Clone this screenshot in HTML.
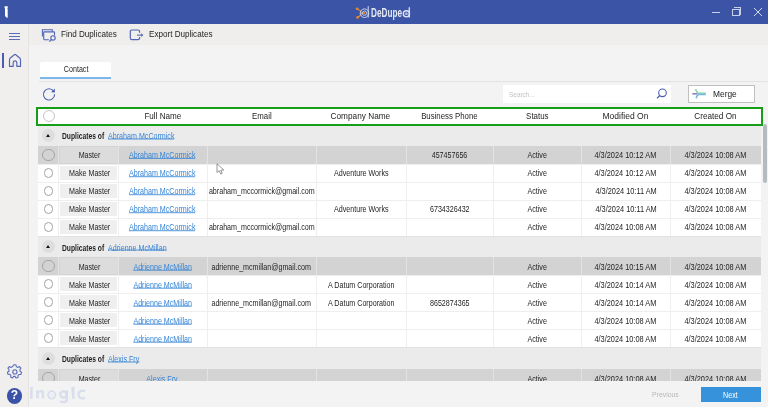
<!DOCTYPE html>
<html><head><meta charset="utf-8">
<style>
*{margin:0;padding:0;box-sizing:border-box}
html,body{width:768px;height:407px;overflow:hidden;background:#f3f3f3;font-family:"Liberation Sans",sans-serif;color:#1e1e1e}
.a{position:absolute}
#title{position:absolute;left:0;top:0;width:768px;height:23.5px;background:#3b54a5}
#side{position:absolute;left:0;top:23.5px;width:29px;height:384px;background:#f0efee;border-right:1px solid #e4e3e2}
#tool{position:absolute;left:29px;top:23.5px;width:740px;height:21.5px;background:#efeeed}
.t{display:inline-block;font-size:8.2px;line-height:10px;white-space:nowrap;transform:translateY(1.2px) scaleX(.87);transform-origin:50% 50%}
.tm{transform:translateY(1.7px) scaleX(.87)}
.td{transform:translateY(1.2px) scaleX(.9)}
.tm.td{transform:translateY(1.7px) scaleX(.9)}
.g2{transform:translateY(1.7px) scaleX(.87)}
.g2.td{transform:translateY(1.7px) scaleX(.9)}
.tm.g1{transform:translateY(0.9px) scaleX(.87)}
.tm.g1.td{transform:translateY(0.9px) scaleX(.9)}
.th{display:inline-block;font-size:8.7px;line-height:11px;white-space:nowrap;transform:scaleX(.93);transform-origin:50% 50%;color:#1e1e1e}
.tb{display:inline-block;font-size:8.3px;line-height:10px;font-weight:bold;white-space:nowrap;transform:translateY(1.3px) scaleX(.81);transform-origin:0 50%;color:#1e1e1e;width:46.2px}
.c{position:absolute;display:flex;align-items:center;justify-content:center;overflow:visible}
.lk{color:#3584d6;transform-origin:0 50%}
.ul{position:relative} .ul::after{content:'';position:absolute;left:0;right:0;top:6.6px;height:0.9px;background:currentColor;opacity:.85}
#gridclip{position:absolute;left:0;top:0;width:768px;height:380.7px;overflow:hidden}
.gh{position:absolute;left:38px;width:723px;background:#ebebeb;border-top:1px solid #e2e2e2}
.ght{position:absolute;left:62px;display:flex;align-items:center}
.col{position:absolute;left:42.2px;width:13px;height:13px;border-radius:50%;background:#dedede}
.tri{position:absolute;left:4px;top:5px;width:0;height:0;border-left:2.6px solid transparent;border-right:2.6px solid transparent;border-bottom:3px solid #111}
.row{position:absolute;left:38px;width:722.8px;background:#fff;border-top:1px solid #eeeeee}
.row.m{background:#d3d3d3;border-top:0}
.vs{position:absolute;top:0;bottom:0;width:1px;background:#efefef}
.row.m .vs{background:#e3e3e3}
.cb{position:absolute;width:11px;height:11px;border-radius:50%;border:1px solid #a3a3a3;background:#fff}
.mcb{background:#d3d3d3;border-color:#a5a5a5}
.btn{position:absolute;background:#efefef;display:flex;align-items:center;justify-content:center}
.mbtn{background:#dcdcdc}
</style></head><body><div style="position:absolute;left:0;top:0;width:768px;height:407px;will-change:transform">
<div id="title">
  <svg class="a" style="left:0;top:0" width="12" height="23" viewBox="0 0 12 23"><path d="M4.6 6.3 H7.7 V7.9 L7.1 8.5 L7.7 9.1 V17.7 L6.2 17.4 L5 15.8 V8.6 L4.6 8.1 Z" fill="#fff"/></svg>
  <svg class="a" style="left:354px;top:3px" width="60" height="18" viewBox="0 0 60 18">
    <path d="M3.1 5.75 Q11.5 10.1 3.6 14.4 M7.4 10.1 H10.4" stroke="#e8892b" stroke-width="1.1" fill="none"/>
    <circle cx="3.1" cy="5.75" r="1.35" fill="#e8892b"/><circle cx="3.6" cy="14.4" r="1.35" fill="#e8892b"/>
    <circle cx="10.5" cy="10.2" r="4.3" stroke="#d5dcf0" stroke-width="0.9" fill="none"/>
    <circle cx="10.5" cy="10.2" r="2.2" stroke="#d5dcf0" stroke-width="0.8" fill="none"/>
    <circle cx="10.4" cy="10.2" r="1.1" fill="#e8892b"/>
    <path d="M14.2 3.1 V14.6" stroke="#d5dcf0" stroke-width="1"/>
    <text x="17" y="14.4" font-family="Liberation Sans" font-weight="bold" font-size="13.2" fill="#e3e8f6" textLength="31" lengthAdjust="spacingAndGlyphs">DeDupe</text>
    <circle cx="52.4" cy="10.8" r="3.1" stroke="#dfe5f5" stroke-width="1.4" fill="none"/><circle cx="52.4" cy="10.8" r="1.2" fill="#c5cdea"/>
    <path d="M55.3 4.2 V14.4" stroke="#dfe5f5" stroke-width="1.3"/>
  </svg>
  <div class="a" style="left:712px;top:12px;width:8px;height:1px;background:#c9d0ea"></div>
  <div class="a" style="left:732px;top:8.5px;width:7.5px;height:7.5px;border:1px solid #c9d0ea"></div>
  <div class="a" style="left:733.5px;top:7px;width:7.5px;height:7.5px;border-top:1px solid #c9d0ea;border-right:1px solid #c9d0ea"></div>
  <svg class="a" style="left:753px;top:7px" width="10" height="10" viewBox="0 0 10 10"><path d="M1 1 L9 9 M9 1 L1 9" stroke="#d3d9ee" stroke-width="1"/></svg>
</div>
<div id="side">
  <div class="a" style="left:9.4px;top:9.2px;width:10.2px;height:1.1px;background:#5b6cb8"></div>
  <div class="a" style="left:9.4px;top:12.4px;width:10.2px;height:1.1px;background:#5b6cb8"></div>
  <div class="a" style="left:9.4px;top:15.6px;width:10.2px;height:1.1px;background:#5b6cb8"></div>
  <div class="a" style="left:2px;top:29.6px;width:1.8px;height:15.2px;background:#4a5db0"></div>
  <svg class="a" style="left:8px;top:29.5px" width="14" height="15" viewBox="0 0 14 15"><path d="M1.5 13.3 V6.4 Q1.5 5.8 2 5.3 L6.3 1.7 Q7 1.2 7.7 1.7 L12 5.3 Q12.5 5.8 12.5 6.4 V13.3 H8.8 V9.6 A1.8 1.8 0 0 0 5.2 9.6 V13.3 Z" fill="none" stroke="#5264b4" stroke-width="1.15" stroke-linejoin="round"/></svg>
  <svg class="a" style="left:6.5px;top:340.7px" width="16" height="16" viewBox="0 0 16 16"><path d="M6.9 1.3 H9.1 L9.5 3.3 L11 4.1 L12.9 3.2 L14.3 4.9 L13.2 6.6 L13.5 8.2 L15.1 9.4 L14.4 11.5 L12.4 11.5 L11.2 12.7 L11.3 14.7 L9.2 15.2 L8.2 13.6 H6.6 L5.5 15.2 L3.6 14.5 L3.7 12.5 L2.6 11.4 L0.6 11.3 L0.1 9.2 L1.8 8.2 V6.6 L0.7 4.9 L2.1 3.2 L4 4.1 L5.5 3.3 Z" transform="translate(0.3,-0.5) scale(0.95)" fill="none" stroke="#5a6cb8" stroke-width="1.15" stroke-linejoin="round"/><circle cx="7.9" cy="7.9" r="2.1" fill="none" stroke="#5a6cb8" stroke-width="1.1"/></svg>
  <div class="a" style="left:7px;top:364.5px;width:15px;height:15.5px;border-radius:50%;background:#3a52a7;color:#fff;font-weight:bold;font-size:12px;line-height:15.5px;text-align:center">?</div>
</div>
<div id="tool">
  <svg class="a" style="left:12px;top:4px" width="16" height="16" viewBox="0 0 16 16">
    <path d="M1.4 8.6 V1.7 H11.3 V3.4" fill="none" stroke="#5264b4" stroke-width="1.1"/>
    <path d="M7.9 11.7 H3.3 Q2.7 11.7 2.7 11.1 V4.5 Q2.7 3.9 3.3 3.9 H12.9 Q13.5 3.9 13.5 4.5 V7.4" fill="none" stroke="#5264b4" stroke-width="1.1"/>
    <circle cx="12" cy="9.9" r="2.2" fill="none" stroke="#5264b4" stroke-width="1.1"/>
    <path d="M10.4 11.5 L8.4 13.6" stroke="#5264b4" stroke-width="1.2"/>
  </svg>
  <span class="a" style="left:32px;top:5.8px;font-size:9px;line-height:11px;transform:scaleX(.9);transform-origin:0 50%;color:#1e1e1e;white-space:nowrap">Find Duplicates</span>
  <svg class="a" style="left:100px;top:4px" width="18" height="16" viewBox="0 0 18 16">
    <path d="M10.6 4.7 V3.6 Q10.6 2 9 2 H2.9 Q1.3 2 1.3 3.6 V10 Q1.3 11.6 2.9 11.6 H9 Q10.6 11.6 10.6 10 V9.1" fill="none" stroke="#5264b4" stroke-width="1.2"/>
    <path d="M8 7.1 H12.6" stroke="#5264b4" stroke-width="1.1"/>
    <path d="M12.2 5.3 L14.4 7.1 L12.2 8.9 Z" fill="#5264b4"/>
  </svg>
  <span class="a" style="left:119.6px;top:5.8px;font-size:9px;line-height:11px;transform:scaleX(.9);transform-origin:0 50%;color:#1e1e1e;white-space:nowrap">Export Duplicates</span>
</div>
<!-- tab -->
<div class="a" style="left:40.3px;top:62px;width:70.8px;height:17px;background:#fff;border-radius:2px 2px 0 0;border-bottom:2px solid #7db7e7"></div>
<div class="c" style="left:40.3px;top:61.3px;width:70.8px;height:15px"><span class="t" style="color:#1e1e1e">Contact</span></div>
<div class="a" style="left:38.5px;top:81px;width:730px;height:1px;background:#e3e3e3"></div>
<svg class="a" style="left:41px;top:86px" width="16" height="16" viewBox="0 0 16 16">
  <path d="M12.6 5.2 A5.6 5.6 0 1 0 13.6 8.3" fill="none" stroke="#5064b4" stroke-width="1.15"/>
  <path d="M13.8 2.6 L13.9 6.5 L10.1 6.3 Z" fill="#5064b4"/>
</svg>
<!-- search -->
<div class="a" style="left:502.8px;top:85.2px;width:168px;height:17.6px;background:#fff"></div>
<span class="a" style="left:508.5px;top:89.5px;font-size:7px;line-height:9px;color:#c2c2c2;transform:scaleX(.92);transform-origin:0 50%;white-space:nowrap">Search...</span>
<svg class="a" style="left:655px;top:87px" width="13" height="13" viewBox="0 0 13 13">
  <circle cx="7.5" cy="5.8" r="3.8" fill="none" stroke="#4a5cb0" stroke-width="1.1"/>
  <path d="M4.8 8.5 L2 11.4" stroke="#4a5cb0" stroke-width="1.3"/>
</svg>
<!-- merge -->
<div class="a" style="left:688.3px;top:85px;width:66.4px;height:18.4px;background:#fff;border:1px solid #c0c0c0"></div>
<svg class="a" style="left:688px;top:84px" width="20" height="18" viewBox="0 0 20 18">
  <path d="M4.3 9.8 H9.2" stroke="#8d82c2" stroke-width="1.6"/>
  <path d="M7.6 5 Q8 7.6 10 9.2 H17.8" fill="none" stroke="#86d4a6" stroke-width="1.5"/>
  <path d="M8.2 14.4 Q8.5 11.6 10.4 10.5 H17.8" fill="none" stroke="#78b6e4" stroke-width="1.5"/>
</svg>
<span class="a" style="left:712.5px;top:88.5px;font-size:9px;line-height:11px;color:#1e1e1e;transform:scaleX(.93);transform-origin:0 50%;white-space:nowrap">Merge</span>
<!-- grid -->
<div id="gridclip">
<div class="gh" style="top:124.4px;height:21.599999999999994px"></div>
<div class="col" style="top:128.7px"><div class="tri"></div></div>
<div class="ght" style="top:124.4px;height:21.599999999999994px"><span class="tb">Duplicates of</span><span class="t lk ul" style="margin-left:0px;transform:translateY(1.5px) scaleX(.87)">Abraham McCormick</span></div>
<div class="row m" style="top:146.0px;height:18px">
<div class="vs" style="left:20.200000000000003px"></div>
<div class="vs" style="left:80.2px"></div>
<div class="vs" style="left:168.6px"></div>
<div class="vs" style="left:278.2px"></div>
<div class="vs" style="left:367.5px"></div>
<div class="vs" style="left:455.4px"></div>
<div class="vs" style="left:543.2px"></div>
<div class="vs" style="left:632.2px"></div>
</div>
<div class="cb mcb" style="left:42.05px;top:148.65px;width:12.7px;height:12.7px"></div>
<div class="btn mbtn" style="left:59.7px;width:58.1px;top:146.9px;height:16.3px;padding-left:1.6px"><span class="t tm g1">Master</span></div>
<div class="c" style="left:118.2px;width:88.39999999999999px;top:146.0px;height:18px"><span class="t tm g1 ul" style="color:#3584d6;">Abraham McCormick</span></div>
<div class="c" style="left:405.5px;width:87.89999999999998px;top:146.0px;height:18px"><span class="t tm g1" style="color:#1e1e1e;">457457656</span></div>
<div class="c" style="left:493.4px;width:87.80000000000007px;top:146.0px;height:18px"><span class="t tm g1" style="color:#1e1e1e;">Active</span></div>
<div class="c" style="left:581.2px;width:89.0px;top:146.0px;height:18px"><span class="t tm g1 td" style="color:#1e1e1e;">4/3/2024 10:12 AM</span></div>
<div class="c" style="left:670.2px;width:90.59999999999991px;top:146.0px;height:18px"><span class="t tm g1 td" style="color:#1e1e1e;">4/3/2024 10:08 AM</span></div>
<div class="row" style="top:164.0px;height:18px">
<div class="vs" style="left:20.200000000000003px"></div>
<div class="vs" style="left:80.2px"></div>
<div class="vs" style="left:168.6px"></div>
<div class="vs" style="left:278.2px"></div>
<div class="vs" style="left:367.5px"></div>
<div class="vs" style="left:455.4px"></div>
<div class="vs" style="left:543.2px"></div>
<div class="vs" style="left:632.2px"></div>
</div>
<div class="cb" style="left:43.800000000000004px;top:168.2px;width:9.6px;height:9.6px"></div>
<div class="btn" style="left:60px;width:56.8px;top:166.2px;height:13.7px;padding-left:3px;padding-top:0.1px"><span class="t">Make Master</span></div>
<div class="c" style="left:118.2px;width:88.39999999999999px;top:164.0px;height:18px"><span class="t ul" style="color:#3584d6;">Abraham McCormick</span></div>
<div class="c" style="left:316.2px;width:89.30000000000001px;top:164.0px;height:18px"><span class="t" style="color:#1e1e1e;">Adventure Works</span></div>
<div class="c" style="left:493.4px;width:87.80000000000007px;top:164.0px;height:18px"><span class="t" style="color:#1e1e1e;">Active</span></div>
<div class="c" style="left:581.2px;width:89.0px;top:164.0px;height:18px"><span class="t td" style="color:#1e1e1e;">4/3/2024 10:12 AM</span></div>
<div class="c" style="left:670.2px;width:90.59999999999991px;top:164.0px;height:18px"><span class="t td" style="color:#1e1e1e;">4/3/2024 10:08 AM</span></div>
<div class="row" style="top:182.0px;height:18px">
<div class="vs" style="left:20.200000000000003px"></div>
<div class="vs" style="left:80.2px"></div>
<div class="vs" style="left:168.6px"></div>
<div class="vs" style="left:278.2px"></div>
<div class="vs" style="left:367.5px"></div>
<div class="vs" style="left:455.4px"></div>
<div class="vs" style="left:543.2px"></div>
<div class="vs" style="left:632.2px"></div>
</div>
<div class="cb" style="left:43.800000000000004px;top:186.2px;width:9.6px;height:9.6px"></div>
<div class="btn" style="left:60px;width:56.8px;top:184.2px;height:13.7px;padding-left:3px;padding-top:0.1px"><span class="t">Make Master</span></div>
<div class="c" style="left:118.2px;width:88.39999999999999px;top:182.0px;height:18px"><span class="t ul" style="color:#3584d6;">Abraham McCormick</span></div>
<div class="c" style="left:206.6px;width:109.6px;top:182.0px;height:18px"><span class="t" style="color:#1e1e1e;">abraham_mccormick@gmail.com</span></div>
<div class="c" style="left:493.4px;width:87.80000000000007px;top:182.0px;height:18px"><span class="t" style="color:#1e1e1e;">Active</span></div>
<div class="c" style="left:581.2px;width:89.0px;top:182.0px;height:18px"><span class="t td" style="color:#1e1e1e;">4/3/2024 10:11 AM</span></div>
<div class="c" style="left:670.2px;width:90.59999999999991px;top:182.0px;height:18px"><span class="t td" style="color:#1e1e1e;">4/3/2024 10:08 AM</span></div>
<div class="row" style="top:200.0px;height:18px">
<div class="vs" style="left:20.200000000000003px"></div>
<div class="vs" style="left:80.2px"></div>
<div class="vs" style="left:168.6px"></div>
<div class="vs" style="left:278.2px"></div>
<div class="vs" style="left:367.5px"></div>
<div class="vs" style="left:455.4px"></div>
<div class="vs" style="left:543.2px"></div>
<div class="vs" style="left:632.2px"></div>
</div>
<div class="cb" style="left:43.800000000000004px;top:204.2px;width:9.6px;height:9.6px"></div>
<div class="btn" style="left:60px;width:56.8px;top:202.2px;height:13.7px;padding-left:3px;padding-top:0.1px"><span class="t">Make Master</span></div>
<div class="c" style="left:118.2px;width:88.39999999999999px;top:200.0px;height:18px"><span class="t ul" style="color:#3584d6;">Abraham McCormick</span></div>
<div class="c" style="left:316.2px;width:89.30000000000001px;top:200.0px;height:18px"><span class="t" style="color:#1e1e1e;">Adventure Works</span></div>
<div class="c" style="left:405.5px;width:87.89999999999998px;top:200.0px;height:18px"><span class="t" style="color:#1e1e1e;">6734326432</span></div>
<div class="c" style="left:493.4px;width:87.80000000000007px;top:200.0px;height:18px"><span class="t" style="color:#1e1e1e;">Active</span></div>
<div class="c" style="left:581.2px;width:89.0px;top:200.0px;height:18px"><span class="t td" style="color:#1e1e1e;">4/3/2024 10:11 AM</span></div>
<div class="c" style="left:670.2px;width:90.59999999999991px;top:200.0px;height:18px"><span class="t td" style="color:#1e1e1e;">4/3/2024 10:08 AM</span></div>
<div class="row" style="top:218.0px;height:18px">
<div class="vs" style="left:20.200000000000003px"></div>
<div class="vs" style="left:80.2px"></div>
<div class="vs" style="left:168.6px"></div>
<div class="vs" style="left:278.2px"></div>
<div class="vs" style="left:367.5px"></div>
<div class="vs" style="left:455.4px"></div>
<div class="vs" style="left:543.2px"></div>
<div class="vs" style="left:632.2px"></div>
</div>
<div class="cb" style="left:43.800000000000004px;top:222.2px;width:9.6px;height:9.6px"></div>
<div class="btn" style="left:60px;width:56.8px;top:220.2px;height:13.7px;padding-left:3px;padding-top:0.1px"><span class="t">Make Master</span></div>
<div class="c" style="left:118.2px;width:88.39999999999999px;top:218.0px;height:18px"><span class="t ul" style="color:#3584d6;">Abraham McCormick</span></div>
<div class="c" style="left:206.6px;width:109.6px;top:218.0px;height:18px"><span class="t" style="color:#1e1e1e;">abraham_mccormick@gmail.com</span></div>
<div class="c" style="left:493.4px;width:87.80000000000007px;top:218.0px;height:18px"><span class="t" style="color:#1e1e1e;">Active</span></div>
<div class="c" style="left:581.2px;width:89.0px;top:218.0px;height:18px"><span class="t td" style="color:#1e1e1e;">4/3/2024 10:08 AM</span></div>
<div class="c" style="left:670.2px;width:90.59999999999991px;top:218.0px;height:18px"><span class="t td" style="color:#1e1e1e;">4/3/2024 10:08 AM</span></div>
<div class="gh" style="top:236px;height:21px"></div>
<div class="col" style="top:240.0px"><div class="tri"></div></div>
<div class="ght" style="top:236px;height:21px"><span class="tb">Duplicates of</span><span class="t lk ul" style="margin-left:0px;transform:translateY(1.5px) scaleX(.87)">Adrienne McMillan</span></div>
<div class="row m" style="top:257px;height:18px">
<div class="vs" style="left:20.200000000000003px"></div>
<div class="vs" style="left:80.2px"></div>
<div class="vs" style="left:168.6px"></div>
<div class="vs" style="left:278.2px"></div>
<div class="vs" style="left:367.5px"></div>
<div class="vs" style="left:455.4px"></div>
<div class="vs" style="left:543.2px"></div>
<div class="vs" style="left:632.2px"></div>
</div>
<div class="cb mcb" style="left:42.05px;top:259.65px;width:12.7px;height:12.7px"></div>
<div class="btn mbtn" style="left:59.7px;width:58.1px;top:257.9px;height:16.3px;padding-left:1.6px"><span class="t tm">Master</span></div>
<div class="c" style="left:118.2px;width:88.39999999999999px;top:257px;height:18px"><span class="t tm ul" style="color:#3584d6;">Adrienne McMillan</span></div>
<div class="c" style="left:206.6px;width:109.6px;top:257px;height:18px"><span class="t tm" style="color:#1e1e1e;">adrienne_mcmillan@gmail.com</span></div>
<div class="c" style="left:493.4px;width:87.80000000000007px;top:257px;height:18px"><span class="t tm" style="color:#1e1e1e;">Active</span></div>
<div class="c" style="left:581.2px;width:89.0px;top:257px;height:18px"><span class="t tm td" style="color:#1e1e1e;">4/3/2024 10:15 AM</span></div>
<div class="c" style="left:670.2px;width:90.59999999999991px;top:257px;height:18px"><span class="t tm td" style="color:#1e1e1e;">4/3/2024 10:08 AM</span></div>
<div class="row" style="top:275px;height:18px">
<div class="vs" style="left:20.200000000000003px"></div>
<div class="vs" style="left:80.2px"></div>
<div class="vs" style="left:168.6px"></div>
<div class="vs" style="left:278.2px"></div>
<div class="vs" style="left:367.5px"></div>
<div class="vs" style="left:455.4px"></div>
<div class="vs" style="left:543.2px"></div>
<div class="vs" style="left:632.2px"></div>
</div>
<div class="cb" style="left:43.800000000000004px;top:279.2px;width:9.6px;height:9.6px"></div>
<div class="btn" style="left:60px;width:56.8px;top:277.2px;height:13.7px;padding-left:3px;padding-top:0.1px"><span class="t g2">Make Master</span></div>
<div class="c" style="left:118.2px;width:88.39999999999999px;top:275px;height:18px"><span class="t g2 ul" style="color:#3584d6;">Adrienne McMillan</span></div>
<div class="c" style="left:316.2px;width:89.30000000000001px;top:275px;height:18px"><span class="t g2" style="color:#1e1e1e;">A Datum Corporation</span></div>
<div class="c" style="left:493.4px;width:87.80000000000007px;top:275px;height:18px"><span class="t g2" style="color:#1e1e1e;">Active</span></div>
<div class="c" style="left:581.2px;width:89.0px;top:275px;height:18px"><span class="t g2 td" style="color:#1e1e1e;">4/3/2024 10:14 AM</span></div>
<div class="c" style="left:670.2px;width:90.59999999999991px;top:275px;height:18px"><span class="t g2 td" style="color:#1e1e1e;">4/3/2024 10:08 AM</span></div>
<div class="row" style="top:293px;height:18px">
<div class="vs" style="left:20.200000000000003px"></div>
<div class="vs" style="left:80.2px"></div>
<div class="vs" style="left:168.6px"></div>
<div class="vs" style="left:278.2px"></div>
<div class="vs" style="left:367.5px"></div>
<div class="vs" style="left:455.4px"></div>
<div class="vs" style="left:543.2px"></div>
<div class="vs" style="left:632.2px"></div>
</div>
<div class="cb" style="left:43.800000000000004px;top:297.2px;width:9.6px;height:9.6px"></div>
<div class="btn" style="left:60px;width:56.8px;top:295.2px;height:13.7px;padding-left:3px;padding-top:0.1px"><span class="t g2">Make Master</span></div>
<div class="c" style="left:118.2px;width:88.39999999999999px;top:293px;height:18px"><span class="t g2 ul" style="color:#3584d6;">Adrienne McMillan</span></div>
<div class="c" style="left:206.6px;width:109.6px;top:293px;height:18px"><span class="t g2" style="color:#1e1e1e;">adrienne_mcmillan@gmail.com</span></div>
<div class="c" style="left:316.2px;width:89.30000000000001px;top:293px;height:18px"><span class="t g2" style="color:#1e1e1e;">A Datum Corporation</span></div>
<div class="c" style="left:405.5px;width:87.89999999999998px;top:293px;height:18px"><span class="t g2" style="color:#1e1e1e;">8652874365</span></div>
<div class="c" style="left:493.4px;width:87.80000000000007px;top:293px;height:18px"><span class="t g2" style="color:#1e1e1e;">Active</span></div>
<div class="c" style="left:581.2px;width:89.0px;top:293px;height:18px"><span class="t g2 td" style="color:#1e1e1e;">4/3/2024 10:14 AM</span></div>
<div class="c" style="left:670.2px;width:90.59999999999991px;top:293px;height:18px"><span class="t g2 td" style="color:#1e1e1e;">4/3/2024 10:08 AM</span></div>
<div class="row" style="top:311px;height:18px">
<div class="vs" style="left:20.200000000000003px"></div>
<div class="vs" style="left:80.2px"></div>
<div class="vs" style="left:168.6px"></div>
<div class="vs" style="left:278.2px"></div>
<div class="vs" style="left:367.5px"></div>
<div class="vs" style="left:455.4px"></div>
<div class="vs" style="left:543.2px"></div>
<div class="vs" style="left:632.2px"></div>
</div>
<div class="cb" style="left:43.800000000000004px;top:315.2px;width:9.6px;height:9.6px"></div>
<div class="btn" style="left:60px;width:56.8px;top:313.2px;height:13.7px;padding-left:3px;padding-top:0.1px"><span class="t g2">Make Master</span></div>
<div class="c" style="left:118.2px;width:88.39999999999999px;top:311px;height:18px"><span class="t g2 ul" style="color:#3584d6;">Adrienne McMillan</span></div>
<div class="c" style="left:493.4px;width:87.80000000000007px;top:311px;height:18px"><span class="t g2" style="color:#1e1e1e;">Active</span></div>
<div class="c" style="left:581.2px;width:89.0px;top:311px;height:18px"><span class="t g2 td" style="color:#1e1e1e;">4/3/2024 10:08 AM</span></div>
<div class="c" style="left:670.2px;width:90.59999999999991px;top:311px;height:18px"><span class="t g2 td" style="color:#1e1e1e;">4/3/2024 10:08 AM</span></div>
<div class="row" style="top:329px;height:18px">
<div class="vs" style="left:20.200000000000003px"></div>
<div class="vs" style="left:80.2px"></div>
<div class="vs" style="left:168.6px"></div>
<div class="vs" style="left:278.2px"></div>
<div class="vs" style="left:367.5px"></div>
<div class="vs" style="left:455.4px"></div>
<div class="vs" style="left:543.2px"></div>
<div class="vs" style="left:632.2px"></div>
</div>
<div class="cb" style="left:43.800000000000004px;top:333.2px;width:9.6px;height:9.6px"></div>
<div class="btn" style="left:60px;width:56.8px;top:331.2px;height:13.7px;padding-left:3px;padding-top:0.1px"><span class="t g2">Make Master</span></div>
<div class="c" style="left:118.2px;width:88.39999999999999px;top:329px;height:18px"><span class="t g2 ul" style="color:#3584d6;">Adrienne McMillan</span></div>
<div class="c" style="left:493.4px;width:87.80000000000007px;top:329px;height:18px"><span class="t g2" style="color:#1e1e1e;">Active</span></div>
<div class="c" style="left:581.2px;width:89.0px;top:329px;height:18px"><span class="t g2 td" style="color:#1e1e1e;">4/3/2024 10:08 AM</span></div>
<div class="c" style="left:670.2px;width:90.59999999999991px;top:329px;height:18px"><span class="t g2 td" style="color:#1e1e1e;">4/3/2024 10:08 AM</span></div>
<div class="gh" style="top:347px;height:22px"></div>
<div class="col" style="top:351.5px"><div class="tri"></div></div>
<div class="ght" style="top:347px;height:22px"><span class="tb">Duplicates of</span><span class="t lk ul" style="margin-left:0px;transform:translateY(1.5px) scaleX(.87)">Alexis Fry</span></div>
<div class="row m" style="top:369px;height:18px">
<div class="vs" style="left:20.200000000000003px"></div>
<div class="vs" style="left:80.2px"></div>
<div class="vs" style="left:168.6px"></div>
<div class="vs" style="left:278.2px"></div>
<div class="vs" style="left:367.5px"></div>
<div class="vs" style="left:455.4px"></div>
<div class="vs" style="left:543.2px"></div>
<div class="vs" style="left:632.2px"></div>
</div>
<div class="cb mcb" style="left:42.05px;top:371.65px;width:12.7px;height:12.7px"></div>
<div class="btn mbtn" style="left:59.7px;width:58.1px;top:369.9px;height:16.3px;padding-left:1.6px"><span class="t tm">Master</span></div>
<div class="c" style="left:118.2px;width:88.39999999999999px;top:369px;height:18px"><span class="t tm ul" style="color:#3584d6;">Alexis Fry</span></div>
<div class="c" style="left:493.4px;width:87.80000000000007px;top:369px;height:18px"><span class="t tm" style="color:#1e1e1e;">Active</span></div>
<div class="c" style="left:581.2px;width:89.0px;top:369px;height:18px"><span class="t tm td" style="color:#1e1e1e;">4/3/2024 10:08 AM</span></div>
<div class="c" style="left:670.2px;width:90.59999999999991px;top:369px;height:18px"><span class="t tm td" style="color:#1e1e1e;">4/3/2024 10:08 AM</span></div>
</div>
<!-- header -->
<div class="a" style="left:36px;top:107px;width:727px;height:19.1px;background:#fff;border:2px solid #169e16"></div>
<div class="cb" style="left:42.8px;top:109.9px;width:12.1px;height:12.1px;border-color:#c4c4c4"></div>
<div class="c" style="left:118.2px;width:88.39999999999999px;top:108px;height:17px"><span class="th" style="transform:scaleX(0.93)">Full Name</span></div>
<div class="c" style="left:206.6px;width:109.6px;top:108px;height:17px"><span class="th" style="transform:scaleX(0.905)">Email</span></div>
<div class="c" style="left:316.2px;width:89.30000000000001px;top:108px;height:17px"><span class="th" style="transform:scaleX(0.95)">Company Name</span></div>
<div class="c" style="left:405.5px;width:87.89999999999998px;top:108px;height:17px"><span class="th" style="transform:scaleX(0.9)">Business Phone</span></div>
<div class="c" style="left:493.4px;width:87.80000000000007px;top:108px;height:17px"><span class="th" style="transform:scaleX(0.91)">Status</span></div>
<div class="c" style="left:581.2px;width:89.0px;top:108px;height:17px"><span class="th" style="transform:scaleX(0.98)">Modified On</span></div>
<div class="c" style="left:670.2px;width:90.59999999999991px;top:108px;height:17px"><span class="th" style="transform:scaleX(0.94)">Created On</span></div>
<!-- scrollbar -->
<div class="a" style="left:762.6px;top:124px;width:4.4px;height:59px;background:#b5bcc0;border-radius:2.2px"></div>
<!-- cursor -->
<svg class="a" style="left:216px;top:163px" width="10" height="13" viewBox="0 0 10 13">
  <path d="M1 0.8 V9.5 L3.2 7.7 L4.8 11 L6.2 10.3 L4.8 7.2 L7.8 7 Z" fill="#fff" stroke="#6a6a6a" stroke-width="0.7" stroke-linejoin="round"/>
</svg>
<!-- footer -->
<svg class="a" style="left:28px;top:382px" width="60" height="24" viewBox="0 0 60 24">
  <g fill="#d8deeb">
   <path d="M2.1 5.4 L4.7 4.4 V16.8 H2.1 Z"/>
   <path d="M8.2 8.2 H10.8 V9.3 Q12 8 13.6 8 Q16.2 8 16.2 11 V16.6 H13.6 V11.5 Q13.6 10.3 12.5 10.3 Q10.8 10.3 10.8 12 V16.6 H8.2 Z"/>
   <path d="M40.1 8.2 V17.5 Q40.1 21.2 35.5 21.2 Q33 21.2 31.5 20 L32.6 18.2 Q33.8 19.1 35.3 19.1 Q37.6 19.1 37.6 17 V8.2 Z"/>
   <path d="M43.3 5.2 L46.5 4.4 V16.8 H44.2 Z"/>
  </g>
  <g fill="none" stroke="#d8deeb">
   <circle cx="23.75" cy="12.9" r="3.7" stroke-width="1.8"/>
   <circle cx="23.75" cy="12.9" r="1.6" stroke-width="0.7" stroke="#e4e8f1"/>
   <circle cx="35.4" cy="12.4" r="3.1" stroke-width="2.3"/>
   <path d="M57 9.6 A3.9 3.9 0 1 0 57 15.4" stroke-width="2.4"/>
  </g>
</svg>
<span class="a" style="left:651.5px;top:389.5px;font-size:8px;line-height:10px;color:#b8b8b8;transform:scaleX(.86);transform-origin:0 50%;white-space:nowrap">Previous</span>
<div class="c" style="left:700.5px;top:386.9px;width:60.3px;height:15.3px;background:#3592db"><span class="t" style="color:#fff">Next</span></div>
</div></body></html>
